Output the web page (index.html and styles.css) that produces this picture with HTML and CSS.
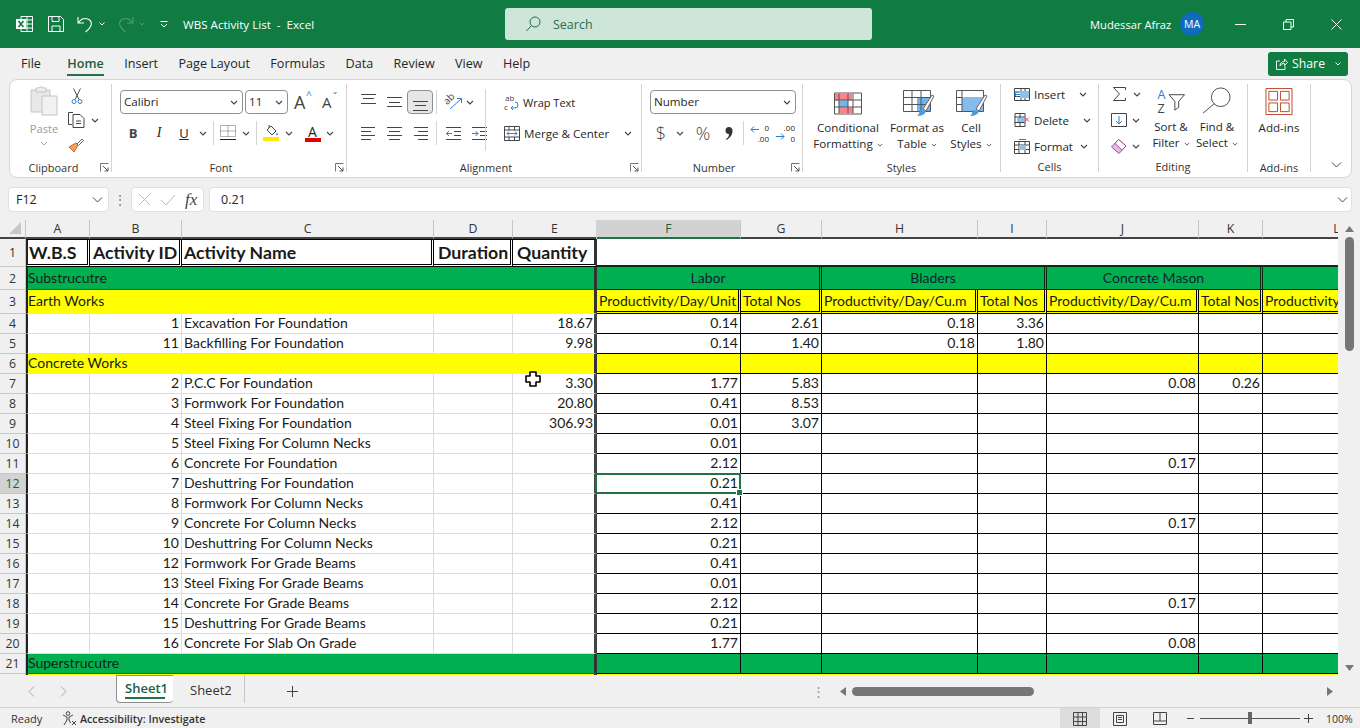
FILE: index.html
```html
<!DOCTYPE html>
<html lang="en">
<head>
<meta charset="utf-8">
<title>WBS Activity List - Excel</title>
<link rel="stylesheet" href="styles.css">
</head>
<body>
<svg class="defs" width="0" height="0" aria-hidden="true">
  <symbol id="chev" viewBox="0 0 8 5"><path d="M1 1l3 3 3-3" fill="none" stroke="#444" stroke-width="1.1"/></symbol>
  <symbol id="launch" viewBox="0 0 9 9"><path d="M.5 8.5v-8h8" fill="none" stroke="#777"/><path d="M3 3l5 5M8 4.5V8H4.5" fill="none" stroke="#555"/></symbol>
</svg>

<header class="titlebar">
  <div class="qat">
    <svg class="q-logo" width="17" height="16" viewBox="0 0 17 16"><path d="M5 .5h11.500v15H5z" fill="#107c41" stroke="#fff"/><path d="M5 4h11M5 8h11M5 12h11M11 1v14" stroke="#fff"/><path d="M0 3h10v10H0z" fill="#fff"/><path d="M2.500 5l5 6M7.500 5l-5 6" stroke="#107c41" stroke-width="1.700"/></svg>
    <svg class="q-save" width="16" height="16" viewBox="0 0 16 16"><path d="M.5.5h12l3 3v12H.5zM4 .5v5h7v-5M4 15.500V10h8v5.500" fill="none" stroke="#fff"/></svg>
    <svg class="q-undo" width="16" height="17" viewBox="0 0 16 17"><path d="M1 1v6h6M1.500 6.500C4 3 8 1.500 12 3.500c4 3 3 7-3.500 12.500" fill="none" stroke="#fff" stroke-width="1.100"/></svg>
    <svg class="q-chev" width="6" height="4"><path d="M.5.5L3 3 5.500.5" fill="none" stroke="#fff"/></svg>
    <svg class="q-redo" width="16" height="17" viewBox="0 0 16 17"><path d="M15 1v6H9M14.500 6.500C12 3 8 1.500 4 3.500c-4 3-3 7 3.500 12.500" fill="none" stroke="#4f9c76" stroke-width="1.100"/></svg>
    <svg class="q-chev dim" width="6" height="4"><path d="M.5.5L3 3 5.500.5" fill="none" stroke="#4f9c76"/></svg>
    <svg class="q-more" width="8" height="7"><path d="M.5.5h7M1 3l3 3 3-3" fill="none" stroke="#fff"/></svg>
    <span class="doc-title">WBS Activity List &nbsp;-&nbsp; Excel</span>
  </div>
  <div class="search">
    <svg width="15" height="16" viewBox="0 0 15 16"><circle cx="9" cy="6" r="5" fill="none" stroke="#2a6d4c"/><path d="M5.500 9.500L.5 15" stroke="#2a6d4c"/></svg>
    <span>Search</span>
  </div>
  <div class="account">
    <span class="user">Mudessar Afraz</span>
    <span class="avatar">MA</span>
    <div class="winbtns">
      <svg width="11" height="1"><path d="M0 .5h11" stroke="#fff"/></svg>
      <svg width="11" height="11" viewBox="0 0 11 11"><path d="M.5 3h7.500v7.500H.5z M3 3V.5h7.500V8H8" fill="none" stroke="#fff" stroke-linejoin="round"/></svg>
      <svg width="11" height="11" viewBox="0 0 11 11"><path d="M.5.5l10 10M10.500.5l-10 10" stroke="#fff"/></svg>
    </div>
  </div>
</header>

<nav class="tabs">
  <span class="tab t-file">File</span>
  <span class="tab active">Home</span>
  <span class="tab">Insert</span>
  <span class="tab">Page Layout</span>
  <span class="tab">Formulas</span>
  <span class="tab">Data</span>
  <span class="tab">Review</span>
  <span class="tab">View</span>
  <span class="tab">Help</span>
  <span class="share">
    <svg width="12" height="12" viewBox="0 0 12 12"><path d="M4 3H.5v8.500H9V8M4 8c0-3 2-4.500 4.500-4.500V1L11.500 4.500 8.500 7.500V5.500C6.500 5.500 5 6 4 8z" fill="none" stroke="#fff" stroke-width=".9"/></svg>
    <span>Share</span>
    <svg class="share-c" width="6" height="4"><path d="M.5.5L3 3 5.500.5" fill="none" stroke="#fff"/></svg>
  </span>
</nav>

<section class="ribbon">
  <div class="grp g-clip">
    <div class="body clip-body">
      <div class="paste">
        <svg width="28" height="31" viewBox="0 0 28 31"><path d="M1 4h19v22H1z" fill="#e8e8e8" stroke="#c4c4c4"/><path d="M6 2h3l1-1h2l1 1h3v4H6z" fill="#eee" stroke="#c4c4c4"/><path d="M12 10h15v19H12z" fill="#f1f1f1" stroke="#c4c4c4"/></svg>
        <span class="paste-t">Paste</span>
        <svg class="chev" width="8" height="5"><path d="M1 1l3 3 3-3" fill="none" stroke="#aaa"/></svg>
      </div>
      <div class="clip-tools">
        <svg class="i-cut" width="12" height="16" viewBox="0 0 12 16"><path d="M2.500.5l5.500 11M9.500.5l-5.500 11" fill="none" stroke="#555"/><circle cx="3" cy="13.500" r="2" fill="none" stroke="#2b7cd3"/><circle cx="9" cy="13.500" r="2" fill="none" stroke="#2b7cd3"/></svg>
        <span class="copy">
          <svg width="17" height="16" viewBox="0 0 17 16"><path d="M5 .5H.5v12H4M5 2.500h7l4 4v9H5z" fill="none" stroke="#444"/><path d="M8 9h5M8 11.500h5" stroke="#444"/></svg>
          <svg class="chev" width="8" height="5"><use href="#chev"/></svg>
        </span>
        <svg class="i-brush" width="16" height="15" viewBox="0 0 16 15"><path d="M8 5l-7 4 5 5 4-7z" fill="#f0a35b" stroke="#c8692b"/><path d="M9 6l5-5 1.500 1.500-5 5z" fill="#fff" stroke="#666"/></svg>
      </div>
    </div>
    <div class="label">Clipboard<svg class="launch" width="9" height="9"><use href="#launch"/></svg></div>
  </div>

  <div class="grp g-font">
    <div class="body rows font-body">
      <div class="row">
        <span class="select s-font">Calibri<svg width="8" height="5"><use href="#chev"/></svg></span>
        <span class="select s-size">11<svg width="8" height="5"><use href="#chev"/></svg></span>
        <span class="grow">A<sup>^</sup></span>
        <span class="shrink">A<sup>ˇ</sup></span>
      </div>
      <div class="row">
        <span class="b w26 bold">B</span>
        <span class="b w26 ital">I</span>
        <span class="b w24 und">U</span>
        <span class="b w14"><svg width="8" height="5"><use href="#chev"/></svg></span>
        <i class="sep"></i>
        <span class="b w22"><svg width="16" height="16" viewBox="0 0 16 16"><path d="M.5.5h15v11H.5z M8 .5v11M.5 6h15" fill="none" stroke="#666" stroke-dasharray="1 1"/><path d="M0 14.500h16" stroke="#222"/></svg></span>
        <span class="b w14"><svg width="8" height="5"><use href="#chev"/></svg></span>
        <i class="sep"></i>
        <span class="b w22"><svg width="16" height="16" viewBox="0 0 16 16"><path d="M8 1l5 5-4 4-5-5zM6 3V0" fill="none" stroke="#444"/><path d="M14 7l1 3h-2z" fill="#2b7cd3"/><path d="M0 12h16v4H0z" fill="#ffe800"/></svg></span>
        <span class="b w14"><svg width="8" height="5"><use href="#chev"/></svg></span>
        <span class="b w27 fcolor">A<i></i></span>
        <span class="b w14"><svg width="8" height="5"><use href="#chev"/></svg></span>
      </div>
    </div>
    <div class="label">Font<svg class="launch" width="9" height="9"><use href="#launch"/></svg></div>
  </div>

  <div class="grp g-align">
    <div class="body align-body">
      <div class="rows align-left">
        <div class="row">
          <span class="b w26"><svg width="15" height="18"><path d="M0 1.500h15M2 5.500h11M0 10.500h15" stroke="#444"/></svg></span>
          <span class="b w26"><svg width="15" height="18"><path d="M0 4.500h15M2 9.500h11M0 13.500h15" stroke="#444"/></svg></span>
          <span class="b w26 on"><svg width="15" height="18"><path d="M0 8.500h15M2 12.500h11M0 17.500h15" stroke="#444"/></svg></span>
          <i class="sep"></i>
          <span class="b w26"><svg width="17" height="16" viewBox="0 0 17 16"><text x="0" y="8" transform="rotate(-45 5 7)" class="mini">ab</text><path d="M5 15L16 5M12 4.500h4.500V9" fill="none" stroke="#2b7cd3"/></svg></span>
          <span class="b w8"><svg width="8" height="5"><use href="#chev"/></svg></span>
        </div>
        <div class="row">
          <span class="b w26"><svg width="15" height="13"><path d="M0 .5h14M0 4.500h10M0 8.500h14M0 12.500h10" stroke="#444"/></svg></span>
          <span class="b w26"><svg width="15" height="13"><path d="M0 .5h15M2 4.500h11M0 8.500h15M2 12.500h11" stroke="#444"/></svg></span>
          <span class="b w26"><svg width="15" height="13"><path d="M1 .5h14M5 4.500h10M1 8.500h14M5 12.500h10" stroke="#444"/></svg></span>
          <i class="sep"></i>
          <span class="b w26"><svg width="15" height="13"><path d="M8 4.500h7M8 8.500h7M0 .5h15M0 12.500h15" stroke="#444"/><path d="M6 6.500H0M3 4L.5 6.500 3 9" fill="none" stroke="#2b7cd3"/></svg></span>
          <span class="b w26"><svg width="15" height="13"><path d="M8 4.500h7M8 8.500h7M0 .5h15M0 12.500h15" stroke="#444"/><path d="M0 6.500h6M3.500 4L6 6.500 3.500 9" fill="none" stroke="#2b7cd3"/></svg></span>
        </div>
      </div>
      <i class="sep tall"></i>
      <div class="rows align-right">
        <div class="row">
          <svg width="15" height="16" viewBox="0 0 15 16"><text x="1" y="6.500" class="tiny">ab</text><text x="0" y="15.500" class="tiny">c</text><path d="M7 14h4a3 3 0 0 0 0-6M9 12l-2 2 2 2" fill="none" stroke="#2b7cd3"/></svg>
          <span class="txt wrap">Wrap Text</span>
        </div>
        <div class="row">
          <svg width="16" height="15" viewBox="0 0 16 15"><path d="M.5.5h15v14H.5zM.5 4h15M.5 11h15M5 .5V4M10.500.5V4M5 11v3.500M10.500 11v3.500" fill="none" stroke="#444"/><path d="M3 7.500h10M5 5.500l-2 2 2 2M11 5.500l2 2-2 2" fill="none" stroke="#2b7cd3"/></svg>
          <span class="txt">Merge &amp; Center</span>
          <svg class="merge-c" width="8" height="5"><use href="#chev"/></svg>
        </div>
      </div>
    </div>
    <div class="label">Alignment<svg class="launch" width="9" height="9"><use href="#launch"/></svg></div>
  </div>

  <div class="grp g-num">
    <div class="body rows num-body">
      <div class="row"><span class="select s-num">Number<svg width="8" height="5"><use href="#chev"/></svg></span></div>
      <div class="row">
        <span class="b w22 big">$</span>
        <span class="b w16"><svg width="8" height="5"><use href="#chev"/></svg></span>
        <span class="b w30 big">%</span>
        <span class="b w22"><svg width="8" height="13" viewBox="0 0 8 13"><path d="M4 0a3.500 3.500 0 0 1 3.500 4C7.500 8 5 11 1.500 13L1 12c2-1 3-3 3-5a3.500 3.500 0 0 1 0-7z" fill="#333"/></svg></span>
        <i class="sep"></i>
        <span class="b w26 dec"><svg class="arrow" width="9" height="9"><path d="M9 4.500H1M4 1.500l-3 3 3 3" fill="none" stroke="#2b7cd3"/></svg><span>0<br>.00</span></span>
        <span class="b w26 dec"><svg class="arrow low" width="9" height="9"><path d="M0 4.500h8M5 1.500l3 3-3 3" fill="none" stroke="#2b7cd3"/></svg><span>.00<br>0</span></span>
      </div>
    </div>
    <div class="label">Number<svg class="launch" width="9" height="9"><use href="#launch"/></svg></div>
  </div>

  <div class="grp g-styles">
    <div class="body big-body">
      <div class="bigbtn w90">
        <svg width="28" height="22" viewBox="0 0 28 22"><path d="M.5.5h27v21H.5z" fill="#fff" stroke="#555"/><path d="M1 1h17v7H1zM5 15h14v6H5z" fill="#f9848c"/><path d="M5 8h9v7H5z" fill="#6fb4ee"/><path d="M.5 7.500h27M.5 14.500h27M5 1v20M14 1v20M19 1v20" fill="none" stroke="#555"/></svg>
        <span>Conditional<br>Formatting<svg width="6" height="4"><use href="#chev"/></svg></span>
      </div>
      <div class="bigbtn w48 nudge">
        <svg width="31" height="27" viewBox="0 0 31 27"><path d="M.5.5h27v21H.5z" fill="#fff" stroke="#555"/><path d="M14 7h13v14H14z" fill="#6fb4ee"/><path d="M.5 7.500h27M.5 14.500h27M9 .5v21M18 .5v21" stroke="#555" fill="none"/><path d="M20 19l9-14 2 1-8 15z" fill="#fff" stroke="#666"/><path d="M17 20l6 1c-1 4-5 5-9 5 2-1 2-4 3-6z" fill="#4a9cd8"/></svg>
        <span>Format as<br>Table<svg width="6" height="4"><use href="#chev"/></svg></span>
      </div>
      <div class="bigbtn w60">
        <svg width="31" height="27" viewBox="0 0 31 27"><path d="M.5.5h27v21H.5z" fill="#fff" stroke="#555"/><path d="M6 7h21v14H6z" fill="#86bcec"/><path d="M.5 7.500h5.500M.5 14.500h5.500M6 .5v21M.5 .5" stroke="#555" fill="none"/><path d="M20 19l9-14 2 1-8 15z" fill="#fff" stroke="#666"/><path d="M17 20l6 1c-1 4-5 5-9 5 2-1 2-4 3-6z" fill="#4a9cd8"/></svg>
        <span>Cell<br>Styles<svg width="6" height="4"><use href="#chev"/></svg></span>
      </div>
    </div>
    <div class="label">Styles</div>
  </div>

  <div class="grp g-cells">
    <div class="body cell-body">
      <div class="cellbtn">
        <svg width="16" height="13" viewBox="0 0 16 13"><path d="M.5.5h15v12H.5zM7 .5v12M11 .5v12M.5 4h15M.5 8.500h15" fill="none" stroke="#444"/><path d="M6 3h9v7H6z" fill="#8cc3ee"/><path d="M6 6.500H0M3 4L.5 6.500 3 9" fill="none" stroke="#2b7cd3"/></svg>
        <span>Insert</span><svg class="c1" width="8" height="5"><use href="#chev"/></svg>
      </div>
      <div class="cellbtn">
        <svg width="16" height="14" viewBox="0 0 16 14"><path d="M1 .5h10v13H1zM.5 4h10M.5 9.500h10M6 .5v13" fill="none" stroke="#444"/><path d="M3 5h7v4H3z" fill="#8cc3ee"/><path d="M11 4.500l4 4M15 4.500l-4 4" stroke="#e0465c"/></svg>
        <span>Delete</span><svg class="c2" width="8" height="5"><use href="#chev"/></svg>
      </div>
      <div class="cellbtn">
        <svg width="16" height="15" viewBox="0 0 16 15"><path d="M.5 2.500h15v12H.5zM.5 6h15M.5 10.500h15M5 2.500v12M11 2.500v12" fill="none" stroke="#444"/><path d="M5 6h7v5H5z" fill="#8cc3ee"/><path d="M5 .5h7" stroke="#2b7cd3"/></svg>
        <span>Format</span><svg class="c3" width="8" height="5"><use href="#chev"/></svg>
      </div>
    </div>
    <div class="label">Cells</div>
  </div>

  <div class="grp g-edit">
    <div class="body edit-body">
      <div class="edit-tools">
        <span><svg width="13" height="14" viewBox="0 0 13 14"><path d="M12.500 3V.5H.5l6 6.500-6 6.500h12V11" fill="none" stroke="#444"/></svg><svg class="c" width="8" height="5"><use href="#chev"/></svg></span>
        <span><svg width="16" height="14" viewBox="0 0 16 14"><path d="M.5.5h15v13H.5z" fill="none" stroke="#444"/><path d="M8 3v8M5 8l3 3 3-3" fill="none" stroke="#2b7cd3"/></svg><svg class="c" width="8" height="5"><use href="#chev"/></svg></span>
        <span><svg width="16" height="15" viewBox="0 0 16 15"><path d="M.5 8l7-7.500L15 7l-7 7.500z" fill="#e6bce6" stroke="#a349a4"/><path d="M7.500.5L15 7l-4 4-7-6.500z" fill="#fff" stroke="#a349a4"/></svg><svg class="c" width="8" height="5"><use href="#chev"/></svg></span>
      </div>
      <div class="bigbtn w44 sort">
        <svg width="30" height="28" viewBox="0 0 30 28"><text x="1" y="12" class="az blue-t">A</text><text x="1" y="27" class="az">Z</text><path d="M13 8h16l-6 7v6l-4 3v-9z" fill="none" stroke="#444"/></svg>
        <span>Sort &amp;<br>Filter<svg width="6" height="4"><use href="#chev"/></svg></span>
      </div>
      <div class="bigbtn w44 find">
        <svg width="32" height="29" viewBox="0 0 32 29"><circle cx="20" cy="11" r="10" fill="#fff" stroke="#444"/><path d="M13 18L1 28" stroke="#444"/></svg>
        <span>Find &amp;<br>Select<svg width="6" height="4"><use href="#chev"/></svg></span>
      </div>
    </div>
    <div class="label">Editing</div>
  </div>

  <div class="grp g-add">
    <div class="body big-body add-body">
      <div class="bigbtn w63">
        <svg width="28" height="28" viewBox="0 0 28 28"><path d="M.5.5h27v27H.5z" fill="none" stroke="#b7472a"/><path d="M3.500 3.500h9v9h-9zM15.500 3.500h9v9h-9zM3.500 15.500h9v9h-9zM15.500 15.500h9v9h-9z" fill="none" stroke="#b7472a"/></svg>
        <span>Add-ins</span>
      </div>
    </div>
    <div class="label">Add-ins</div>
  </div>

  <svg class="collapse" width="11" height="6"><path d="M1 .5l4.500 4.500L10 .5" fill="none" stroke="#444"/></svg>
</section>

<section class="fbar">
  <span class="namebox">F12<svg width="11" height="6"><path d="M1 .5l4.500 4.500L10 .5" fill="none" stroke="#444"/></svg></span>
  <span class="dots">⋮</span>
  <span class="fxbox">
    <svg width="13" height="13"><path d="M1 1l11 11M12 1L1 12" stroke="#bbb"/></svg>
    <svg width="16" height="12"><path d="M1 6l5 5L15 1" fill="none" stroke="#bbb"/></svg>
    <span class="fx">fx</span>
  </span>
  <span class="finput">0.21<svg width="11" height="6"><path d="M1 .5l4.500 4.500L10 .5" fill="none" stroke="#444"/></svg></span>
</section>

<main class="sheetarea">
  <div class="grid">
    <table>
      <colgroup>
        <col class="ch"><col class="ca"><col class="cb"><col class="cc"><col class="cd"><col class="ce"><col class="cf"><col class="cg"><col class="ch2"><col class="ci"><col class="cj"><col class="ck"><col class="cl">
      </colgroup>
      <thead>
        <tr class="rh">
          <th class="corner"><svg width="13" height="13"><path d="M12 0v12H0z" fill="#c6c6c6"/></svg></th>
          <th>A</th><th>B</th><th>C</th><th>D</th><th>E</th><th class="sel-col">F</th><th>G</th><th>H</th><th>I</th><th>J</th><th>K</th><th>L</th>
        </tr>
      </thead>
      <tbody>
        <tr class="r1"><th>1</th><td class="hd first">W.B.S</td><td class="hd">Activity ID</td><td class="hd">Activity Name</td><td class="hd">Duration</td><td class="hd last">Quantity</td><td colspan="7" class="blank"></td></tr>
        <tr class="r2"><th>2</th><td colspan="5" class="first green-l">Substrucutre</td><td colspan="2" class="gh">Labor</td><td colspan="2" class="gh">Bladers</td><td colspan="2" class="gh">Concrete Mason</td><td class="gh"></td></tr>
        <tr class="r3"><th>3</th><td colspan="5" class="first yellow-l">Earth Works</td><td class="yh">Productivity/Day/Unit</td><td class="yh">Total Nos</td><td class="yh">Productivity/Day/Cu.m</td><td class="yh">Total Nos</td><td class="yh">Productivity/Day/Cu.m</td><td class="yh">Total Nos</td><td class="yh">Productivity/Day/Cu.m</td></tr>
        <tr><th>4</th><td class="first"></td><td class="n">1</td><td class="t">Excavation For Foundation</td><td></td><td class="n e">18.67</td><td class="x n">0.14</td><td class="x n">2.61</td><td class="x n">0.18</td><td class="x n">3.36</td><td class="x"></td><td class="x"></td><td class="x"></td></tr>
        <tr><th>5</th><td class="first"></td><td class="n">11</td><td class="t">Backfilling For Foundation</td><td></td><td class="n e">9.98</td><td class="x n">0.14</td><td class="x n">1.40</td><td class="x n">0.18</td><td class="x n">1.80</td><td class="x"></td><td class="x"></td><td class="x"></td></tr>
        <tr class="yel"><th>6</th><td colspan="5" class="first yellow-l">Concrete Works</td><td class="x"></td><td class="x"></td><td class="x"></td><td class="x"></td><td class="x"></td><td class="x"></td><td class="x"></td></tr>
        <tr><th>7</th><td class="first"></td><td class="n">2</td><td class="t">P.C.C For Foundation</td><td></td><td class="n e">3.30</td><td class="x n">1.77</td><td class="x n">5.83</td><td class="x"></td><td class="x"></td><td class="x n">0.08</td><td class="x n">0.26</td><td class="x"></td></tr>
        <tr><th>8</th><td class="first"></td><td class="n">3</td><td class="t">Formwork For Foundation</td><td></td><td class="n e">20.80</td><td class="x n">0.41</td><td class="x n">8.53</td><td class="x"></td><td class="x"></td><td class="x"></td><td class="x"></td><td class="x"></td></tr>
        <tr><th>9</th><td class="first"></td><td class="n">4</td><td class="t">Steel Fixing For Foundation</td><td></td><td class="n e">306.93</td><td class="x n">0.01</td><td class="x n">3.07</td><td class="x"></td><td class="x"></td><td class="x"></td><td class="x"></td><td class="x"></td></tr>
        <tr><th>10</th><td class="first"></td><td class="n">5</td><td class="t">Steel Fixing For Column Necks</td><td></td><td class="n e"></td><td class="x n">0.01</td><td class="x"></td><td class="x"></td><td class="x"></td><td class="x"></td><td class="x"></td><td class="x"></td></tr>
        <tr><th>11</th><td class="first"></td><td class="n">6</td><td class="t">Concrete For Foundation</td><td></td><td class="n e"></td><td class="x n">2.12</td><td class="x"></td><td class="x"></td><td class="x"></td><td class="x n">0.17</td><td class="x"></td><td class="x"></td></tr>
        <tr><th class="sel-row">12</th><td class="first"></td><td class="n">7</td><td class="t">Deshuttring For Foundation</td><td></td><td class="n e"></td><td class="x n active-cell">0.21</td><td class="x"></td><td class="x"></td><td class="x"></td><td class="x"></td><td class="x"></td><td class="x"></td></tr>
        <tr><th>13</th><td class="first"></td><td class="n">8</td><td class="t">Formwork For Column Necks</td><td></td><td class="n e"></td><td class="x n">0.41</td><td class="x"></td><td class="x"></td><td class="x"></td><td class="x"></td><td class="x"></td><td class="x"></td></tr>
        <tr><th>14</th><td class="first"></td><td class="n">9</td><td class="t">Concrete For Column Necks</td><td></td><td class="n e"></td><td class="x n">2.12</td><td class="x"></td><td class="x"></td><td class="x"></td><td class="x n">0.17</td><td class="x"></td><td class="x"></td></tr>
        <tr><th>15</th><td class="first"></td><td class="n">10</td><td class="t">Deshuttring For Column Necks</td><td></td><td class="n e"></td><td class="x n">0.21</td><td class="x"></td><td class="x"></td><td class="x"></td><td class="x"></td><td class="x"></td><td class="x"></td></tr>
        <tr><th>16</th><td class="first"></td><td class="n">12</td><td class="t">Formwork For Grade Beams</td><td></td><td class="n e"></td><td class="x n">0.41</td><td class="x"></td><td class="x"></td><td class="x"></td><td class="x"></td><td class="x"></td><td class="x"></td></tr>
        <tr><th>17</th><td class="first"></td><td class="n">13</td><td class="t">Steel Fixing For Grade Beams</td><td></td><td class="n e"></td><td class="x n">0.01</td><td class="x"></td><td class="x"></td><td class="x"></td><td class="x"></td><td class="x"></td><td class="x"></td></tr>
        <tr><th>18</th><td class="first"></td><td class="n">14</td><td class="t">Concrete For Grade Beams</td><td></td><td class="n e"></td><td class="x n">2.12</td><td class="x"></td><td class="x"></td><td class="x"></td><td class="x n">0.17</td><td class="x"></td><td class="x"></td></tr>
        <tr><th>19</th><td class="first"></td><td class="n">15</td><td class="t">Deshuttring For Grade Beams</td><td></td><td class="n e"></td><td class="x n">0.21</td><td class="x"></td><td class="x"></td><td class="x"></td><td class="x"></td><td class="x"></td><td class="x"></td></tr>
        <tr><th>20</th><td class="first"></td><td class="n">16</td><td class="t">Concrete For Slab On Grade</td><td></td><td class="n e"></td><td class="x n">1.77</td><td class="x"></td><td class="x"></td><td class="x"></td><td class="x n">0.08</td><td class="x"></td><td class="x"></td></tr>
        <tr class="grn"><th>21</th><td colspan="5" class="first green-l">Superstrucutre</td><td class="x"></td><td class="x"></td><td class="x"></td><td class="x"></td><td class="x"></td><td class="x"></td><td class="x"></td></tr>
        <tr class="yel"><th></th><td colspan="5" class="first yellow-l"></td><td class="x" colspan="7"></td></tr>
      </tbody>
    </table>
    <svg class="cursor" width="16" height="16" viewBox="0 0 16 16"><path d="M5 1h6v4h4v6h-4v4H5v-4H1V5h4z" fill="#fff" stroke="#000" stroke-width="1.600" stroke-linejoin="round"/></svg>
  </div>
  <div class="vscroll">
    <svg width="9" height="6"><path d="M4.500 0L9 6H0z" fill="#777"/></svg>
    <i class="vthumb"></i>
    <svg class="down" width="9" height="6"><path d="M4.500 6L9 0H0z" fill="#777"/></svg>
  </div>
</main>

<section class="sheetbar">
  <svg class="nav1" width="7" height="11"><path d="M6 .5L1 5.500l5 5" fill="none" stroke="#aaa"/></svg>
  <svg class="nav2" width="7" height="11"><path d="M1 .5l5 5-5 5" fill="none" stroke="#aaa"/></svg>
  <span class="stab on">Sheet1</span>
  <span class="stab">Sheet2</span>
  <svg class="plus" width="11" height="11"><path d="M5.500 0v11M0 5.500h11" stroke="#444"/></svg>
  <span class="sdots">⋮</span>
  <svg class="harr" width="6" height="9"><path d="M0 4.500L6 0v9z" fill="#777"/></svg>
  <i class="hthumb"></i>
  <svg class="harr r" width="6" height="9"><path d="M6 4.500L0 0v9z" fill="#777"/></svg>
</section>

<footer class="status">
  <span class="ready">Ready</span>
  <span class="access">
    <svg width="15" height="15" viewBox="0 0 15 15"><circle cx="6" cy="2.500" r="1.800" fill="none" stroke="#444"/><path d="M1 4l4 2v3l-3 5M11 4L7 6v3l1.500 3M10 10l4 4M14 10l-4 4" fill="none" stroke="#444"/></svg>
    Accessibility: Investigate
  </span>
  <div class="views">
    <span class="view on"><svg width="14" height="14"><path d="M.5.5h13v13H.5zM.5 5h13M.5 9.500h13M5 .5v13M9.500.5v13" fill="none" stroke="#444"/></svg></span>
    <span class="view"><svg width="14" height="14"><path d="M.5.5h13v13H.5z" fill="none" stroke="#444"/><path d="M3.500 3.500h7v7h-7zM5 5.500h4M5 7.500h4" fill="none" stroke="#444"/></svg></span>
    <span class="view"><svg width="14" height="13"><path d="M.5.5h13v12H.5zM.5 9h13M7 .5V9" fill="none" stroke="#444"/></svg></span>
  </div>
  <div class="zoom">
    <svg width="7" height="1"><path d="M0 .5h7" stroke="#444"/></svg>
    <span class="slider"><i></i></span>
    <svg width="9" height="9"><path d="M4.500 0v9M0 4.500h9" stroke="#444"/></svg>
    <span class="pct">100%</span>
  </div>
</footer>
</body>
</html>
```
FILE: styles.css
```css
* { box-sizing: border-box; }
html, body { margin: 0; height: 728px; overflow: hidden; }
body {
  display: flex; flex-direction: column;
  background: #f0f0f0; color: #262626;
  font: 12.5px "Open Sans", "Noto Sans", sans-serif;
}
.defs { position: absolute; }
i { display: block; font-style: normal; }
svg { display: block; flex: none; overflow: visible; }

/* title bar */
.titlebar { height: 48px; flex: none; background: #107c41; color: #fff; display: flex; align-items: center; position: relative; }
.qat { width: 505px; display: flex; align-items: center; flex: none; padding-left: 16px; }
.q-save { margin-left: 15px; }
.q-undo { margin-left: 13px; }
.q-chev { margin-left: 6px; }
.q-redo { margin-left: 13px; }
.q-chev.dim { margin-left: 5px; }
.q-more { margin-left: 15px; }
.doc-title { margin-left: 15px; font-size: 11.6px; white-space: nowrap; }
.search { width: 367px; height: 32px; background: #cde6d9; border-radius: 3px; display: flex; align-items: center; gap: 12px; padding-left: 21px; color: #2a6d4c; font-size: 12.5px; flex: none; }
.account { display: flex; align-items: center; flex: none; margin-left: 218px; }
.user { font-size: 11.2px; white-space: nowrap; width: 90px; }
.avatar { width: 24px; height: 24px; border-radius: 50%; background: #0f6cbd; font-size: 10.5px; display: flex; align-items: center; justify-content: center; }
.winbtns { display: flex; align-items: center; gap: 37px; margin-left: 31px; }

/* tabs */
.tabs { height: 31px; flex: none; display: flex; align-items: center; padding-left: 21px; gap: 20.4px; font-size: 12.6px; position: relative; }
.tab { height: 31px; line-height: 32px; white-space: nowrap; position: relative; }
.t-file { margin-right: 6px; }
.tab.active { font-weight: 600; color: #1f5c3e; }
.tab.active::after { content: ""; position: absolute; left: 0; right: 0; bottom: 3px; height: 2px; background: #217346; }
.share { margin-left: auto; margin-right: 12px; width: 80px; height: 24px; background: #107c41; color: #fff; border-radius: 3px; display: flex; align-items: center; padding-left: 8px; gap: 4px; font-size: 12.3px; }
.share-c { margin-left: 6px; }

/* ribbon */
.ribbon { height: 99px; flex: none; margin: 0 8px 0 9px; background: #fff; border: 1px solid #d6d6d6; border-radius: 8px; display: flex; padding: 4px 0 5px; position: relative; }
.grp { display: flex; flex-direction: column; border-right: 1px solid #d4d4d4; flex: none; position: relative; }
.body { height: 75px; flex: none; }
.label { flex: 1; text-align: center; font-size: 11px; line-height: 17px; white-space: nowrap; color: #333; }
.launch { position: absolute; right: 2px; bottom: 0; }
.g-clip { width: 102px; }
.g-font { width: 235px; }
.g-align { width: 295px; }
.g-num { width: 161px; }
.g-styles { width: 198px; }
.g-cells { width: 98px; }
.g-edit { width: 149px; }
.g-add { width: 63px; }
.g-clip .label { padding-right: 14px; }
.g-font .label { padding-right: 16px; }
.g-align .label { padding-right: 16px; }
.g-num .label { padding-right: 16px; }
.collapse { position: absolute; right: 9px; top: 82px; }

.rows { display: flex; flex-direction: column; gap: 7px; padding-top: 6px; }
.row { height: 24px; display: flex; align-items: center; }
.b { height: 24px; display: flex; align-items: center; justify-content: center; flex: none; }
.w8 { width: 8px; } .w14 { width: 14px; } .w16 { width: 16px; } .w22 { width: 22px; } .w24 { width: 24px; }
.w26 { width: 26px; } .w27 { width: 27px; } .w30 { width: 30px; }
.sep { width: 1px; height: 24px; background: #d4d4d4; margin: 0 3px; flex: none; }
.sep.tall { height: 62px; margin: 5px 0 0; }
.mini { font: 10px "Open Sans", sans-serif; fill: #444; }
.tiny { font: 8px "Open Sans", sans-serif; fill: #444; }

.clip-body { display: flex; padding: 2px 0 0 20px; }
.paste { width: 28px; display: flex; flex-direction: column; align-items: center; color: #9c9c9c; }
.paste-t { margin-top: 3px; font-size: 11.2px; line-height: 18px; }
.paste .chev { margin-top: 3px; }
.clip-tools { display: flex; flex-direction: column; padding-left: 10px; width: 50px; }
.i-cut { margin: 0 0 0 3px; height: 20px; }
.copy { display: flex; align-items: center; gap: 6px; margin-top: 6px; }
.i-brush { margin: 10px 0 0 0; }

.font-body { padding-left: 8px; }
.select { height: 24px; border: 1px solid #8f8f8f; border-radius: 4px; display: flex; align-items: center; justify-content: space-between; padding: 0 4px 0 3px; font-size: 11.6px; line-height: 20px; flex: none; }
.s-font { width: 123px; }
.s-size { width: 43px; margin-left: 2px; }
.s-num { width: 146px; }
.grow, .shrink { color: #444; position: relative; }
.grow { font-size: 18px; margin-left: 6px; width: 28px; }
.shrink { font-size: 15px; width: 20px; }
.grow sup, .shrink sup { font-size: 10px; position: absolute; top: 0; left: 12px; line-height: 1; color: #2b7cd3; }
.shrink sup { left: 11px; }
.bold { font-weight: 700; font-size: 13px; color: #444; }
.ital { font-style: italic; font-family: "Liberation Serif", serif; font-size: 14px; }
.und { text-decoration: underline; font-size: 13px; }
.fcolor { flex-direction: column; font-size: 14px; line-height: 13px; padding-left: 6px; }
.fcolor i { width: 16px; height: 4px; background: #e00000; }
.on { background: #e6e6e6; border: 1px solid #8f8f8f; border-radius: 4px; }

.align-body { display: flex; }
.align-left { width: 138px; padding-left: 8px; }
.align-right { padding-left: 18px; }
.align-right .row { gap: 4px; }
.txt { font-size: 11.6px; white-space: nowrap; }
.wrap { font-size: 11px; }
.merge-c { margin-left: 11px; }

.num-body { padding-left: 8px; }
.big { font-size: 18px; font-weight: 300; color: #444; }
.dec { font-size: 8px; line-height: 11px; position: relative; justify-content: flex-end; padding-right: 4px; text-align: right; }
.arrow { position: absolute; left: 3px; top: 4px; }
.arrow.low { top: 11px; }

.big-body { display: flex; padding-top: 6px; }
.bigbtn { display: flex; flex-direction: column; align-items: center; text-align: center; flex: none; font-size: 11.6px; line-height: 16px; white-space: nowrap; }
.bigbtn svg { height: 27px; }
.bigbtn span { display: block; margin-top: 3px; }
.bigbtn span svg { display: inline-block; height: 4px; margin-left: 4px; vertical-align: middle; }
.w44 { width: 44px; } .w48 { width: 48px; } .w60 { width: 60px; } .w63 { width: 62px; } .w90 { width: 90px; }
.nudge svg:first-child { margin-left: 2px; }
.add-body { padding-top: 4px; }
.add-body .bigbtn span { margin-top: 5px; }

.cell-body { display: flex; flex-direction: column; gap: 4px; padding-left: 13px; margin-top: -1px; }
.cellbtn { height: 22px; display: flex; align-items: center; gap: 4px; font-size: 11.6px; }
.c1 { margin-left: 10px; } .c2 { margin-left: 10px; } .c3 { margin-left: 3px; }
.edit-body { display: flex; padding-left: 12px; margin-top: -1px; }
.edit-tools { width: 38px; display: flex; flex-direction: column; gap: 4px; }
.edit-tools span { height: 22px; display: flex; align-items: center; gap: 5px; }
.edit-tools span:nth-child(1) { gap: 7px; padding-left: 2px; }
.sort, .find { padding-top: 4px; }
.sort span, .find span { margin-top: 5px; }
.find { margin-left: 2px; }
.az { font: 13px "Open Sans", sans-serif; fill: #444; }
.blue-t { fill: #2b7cd3; }

/* formula bar */
.fbar { height: 25px; margin: 9px 8px 8px; display: flex; align-items: center; flex: none; }
.namebox { width: 101px; height: 25px; background: #fff; border: 1px solid #e0e0e0; border-radius: 4px; display: flex; align-items: center; justify-content: space-between; padding: 0 5px 0 7px; font-size: 12.5px; }
.dots { width: 22px; text-align: center; color: #888; font-size: 14px; }
.fxbox { width: 73px; height: 25px; background: #fff; border: 1px solid #e0e0e0; border-radius: 4px; display: flex; align-items: center; gap: 9px; padding-left: 6px; }
.fx { font: italic 17px "Liberation Serif", serif; color: #444; }
.finput { margin-left: 5px; flex: 1; height: 25px; background: #fff; border: 1px solid #e0e0e0; border-radius: 4px; display: flex; align-items: center; justify-content: space-between; padding: 0 3px 0 11px; font-size: 12.5px; }

/* sheet */
.sheetarea { height: 455px; flex: none; display: flex; overflow: hidden; }
.grid { width: 1338px; flex: none; overflow: hidden; position: relative; background: #fff; }
table { border-collapse: separate; border-spacing: 0; table-layout: fixed; width: 1411px; font: 14px Lato, "Liberation Sans", sans-serif; color: #1a1a1a; }
col.ch { width: 26px; } col.ca { width: 64px; } col.cb { width: 92px; } col.cc { width: 252px; } col.cd { width: 79px; } col.ce { width: 84px; }
col.cf { width: 144px; } col.cg { width: 81px; } col.ch2 { width: 156px; } col.ci { width: 69px; } col.cj { width: 152px; } col.ck { width: 64px; } col.cl { width: 148px; }
tr { height: 20px; }
tr.rh { height: 19px; }
tr.r1 { height: 28px; }
tr.r2 { height: 23px; }
tr.r3 { height: 24px; }
th { background: #f0f0f0; font: 12.3px "Open Sans", sans-serif; color: #333; border-right: 1px solid #c6c6c6; border-bottom: 1px solid #c6c6c6; padding: 0; text-align: center; }
thead th { border-bottom: 2px solid #444; }
th.corner { position: relative; padding: 0 0 0 9px; }
th.sel-col { background: #d2d2d2; border-bottom-color: #217346; color: #1f5c3e; box-shadow: -1px 0 0 #d2d2d2; }
th.sel-row { background: #d2d2d2; color: #1f5c3e; }
td { padding: 0 2px 2px; border-right: 1px solid #dcdcdc; border-bottom: 1px solid #dcdcdc; white-space: nowrap; overflow: hidden; line-height: 17px; }
td.first { border-left: 2px solid #222; padding-left: 0; }
td.n { text-align: right; }
td.t { padding-left: 2px; }
td.e { border-right: 3px solid #444; padding-right: 1px; }
td.x { border-right: 1px solid #000; border-bottom: 1px solid #000; }
tr.yel td { background: #ff0; }
tr.yel td.first, td.yellow-l { background: #ff0; border-right: 3px solid #333; border-bottom: 1px solid #ff0; }
tr.grn td, td.green-l { background: #00b050; }
td.green-l { border-right: 3px solid #333; border-bottom: 1px solid #0a7a3a; }
td.hd { font-weight: 700; font-size: 17.7px; border-right: 3px double #000; border-bottom: 3px double #000; border-top: 1px solid #000; padding: 0 0 0 3px; }
td.hd.first { padding-left: 1px; }
td.hd:nth-child(4) { padding-left: 2px; }
td.hd:nth-child(5), td.hd:nth-child(6) { padding-left: 4px; }
td.last { border-right: 3px solid #333; }
td.blank { border-bottom: 2px solid #0a2b14; border-right: 0; }
td.gh { background: #00b050; text-align: center; border-right: 3px double #0a2b14; border-bottom: 1px solid #0a2b14; color: #123; }
td.yh { background: #ff0; border-right: 3px double #000; border-bottom: 3px double #000; padding: 0 1px 1px 2px; }
td.active-cell { position: relative; overflow: visible; }
td.active-cell::before { content: ""; position: absolute; left: -2px; right: -1px; top: -1px; bottom: -1px; border: 2px solid #217346; }
td.active-cell::after { content: ""; position: absolute; right: -3px; bottom: -3px; width: 5px; height: 5px; background: #217346; border: 1px solid #fff; box-sizing: content-box; }
.cursor { position: absolute; left: 525px; top: 151px; }

.vscroll { flex: 1; display: flex; flex-direction: column; align-items: center; padding: 6px 0 4px; }
.vthumb { width: 9px; height: 114px; margin-top: 5px; background: #767676; border-radius: 5px; }
.down { margin-top: auto; }

/* sheet tabs */
.sheetbar { height: 32px; flex: none; display: flex; align-items: center; position: relative; }
.nav1 { margin-left: 28px; }
.nav2 { margin-left: 25px; }
.stab { height: 28px; margin-top: -4px; line-height: 28px; padding: 0 9px; font-size: 13px; color: #333; border-right: 1px solid #c6c6c6; white-space: nowrap; }
.stab.on { margin-left: 49px; width: 57px; background: #fff; font-weight: 600; color: #1f5c3e; border-right: 0; position: relative; border-radius: 0 0 4px 4px; padding: 0 0 0 8px; margin-right: 6px; line-height: 24px; }
.stab.on::after { content: ""; position: absolute; left: 8px; right: 8px; bottom: 3px; height: 2px; background: #217346; }
.stab:not(.on) { width: 66px; padding-left: 11px; line-height: 30px; }
.plus { margin-left: 42px; }
.sdots { margin-left: 514px; color: #999; width: 6px; }
.harr { margin-left: 22px; }
.hthumb { width: 182px; height: 9px; background: #767676; border-radius: 5px; margin-left: 6px; }
.harr.r { margin-left: 293px; }

/* status */
.status { height: 22px; flex: none; border-top: 1px solid #d2d2d2; display: flex; align-items: center; font-size: 11px; color: #333; }
.ready { margin-left: 11px; width: 51px; }
.access { display: flex; align-items: center; gap: 3px; font-weight: 600; font-size: 10.7px; white-space: nowrap; width: 998px; }
.views { display: flex; }
.view { width: 40px; height: 21px; display: flex; align-items: center; justify-content: center; }
.view.on { background: #dcdcdc; border: 0; border-radius: 0; }
.zoom { display: flex; align-items: center; margin-left: 7px; }
.slider { width: 100px; height: 1px; background: #555; margin: 0 4px 0 6px; position: relative; }
.slider i { position: absolute; left: 48px; top: -6px; width: 4px; height: 12px; background: #666; }
.pct { margin-left: 13px; font-size: 10.5px; }
```
